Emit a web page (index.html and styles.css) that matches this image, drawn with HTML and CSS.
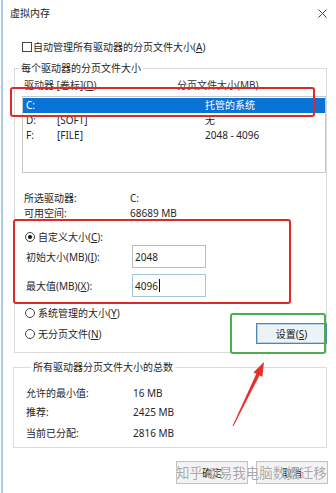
FILE: index.html
```html
<!DOCTYPE html>
<html lang="zh-CN">
<head>
<meta charset="utf-8">
<title>虚拟内存</title>
<link rel="stylesheet" href="styles.css">
</head>
<body>
<div class="window">
  <div class="titlebar">
    <span class="title">虚拟内存</span>
    <svg class="close" width="9" height="9" viewBox="0 0 9 9"><path d="M0.5 0.5L8.5 8.5M8.5 0.5L0.5 8.5" stroke="#444" stroke-width="1" fill="none"/></svg>
  </div>
  <div class="check-row"><span class="checkbox"></span><span>自动管理所有驱动器的分页文件大小(<u>A</u>)</span></div>
  <fieldset class="group group-drives">
    <legend>每个驱动器的分页文件大小</legend>
    <div class="list-head"><span class="col-drive">驱动器 [卷标](<u>D</u>)</span><span>分页文件大小(MB)</span></div>
    <div class="listbox">
      <div class="list-row selected"><span class="c1">C:</span><span class="c2"></span><span class="c3">托管的系统</span></div>
      <div class="list-row"><span class="c1">D:</span><span class="c2">[SOFT]</span><span class="c3">无</span></div>
      <div class="list-row"><span class="c1">F:</span><span class="c2">[FILE]</span><span class="c3">2048 - 4096</span></div>
    </div>
    <div class="info-row first"><span class="info-label">所选驱动器:</span><span>C:</span></div>
    <div class="info-row"><span class="info-label">可用空间:</span><span>68689 MB</span></div>
    <div class="radio-row custom"><span class="radio checked"></span><span>自定义大小(<u>C</u>):</span></div>
    <div class="field-row"><span class="field-label">初始大小(MB)(<u>I</u>):</span><div class="input">2048</div></div>
    <div class="field-row second"><span class="field-label">最大值(MB)(<u>X</u>):</span><div class="input focused">4096<span class="caret"></span></div></div>
    <div class="radio-row sys"><span class="radio"></span><span>系统管理的大小(<u>Y</u>)</span></div>
    <div class="last-row">
      <div class="radio-row"><span class="radio"></span><span>无分页文件(<u>N</u>)</span></div>
      <button class="btn btn-default">设置(<u>S</u>)</button>
    </div>
  </fieldset>
  <fieldset class="group totals">
    <legend>所有驱动器分页文件大小的总数</legend>
    <div class="total-row r1"><span class="total-label">允许的最小值:</span><span>16 MB</span></div>
    <div class="total-row r2"><span class="total-label">推荐:</span><span>2425 MB</span></div>
    <div class="total-row r3"><span class="total-label">当前已分配:</span><span>2816 MB</span></div>
  </fieldset>
  <div class="footer">
    <button class="btn">确定</button>
    <button class="btn">取消</button>
  </div>
</div>

<div class="mark mark-red mark-list"></div>
<div class="mark mark-red mark-custom"></div>
<div class="mark mark-green"></div>
<svg class="arrow" width="336" height="493" viewBox="0 0 336 493">
  <polygon points="232.6,425.8 256.3,373.8 253.4,372.4 264,362 262.4,376.8 259.5,375.4 233.4,426.2" fill="#e8302a"/>
</svg>
<div class="watermark">知乎 @易我电脑数据迁移</div>
</body>
</html>
```

FILE: styles.css
```css
* { box-sizing: border-box; }
html, body { margin: 0; padding: 0; }
body {
  width: 336px;
  height: 493px;
  position: relative;
  overflow: hidden;
  background: #fff;
  font-family: "Noto Sans", "Noto Sans CJK SC", sans-serif;
  font-size: 10px;
  line-height: 12px;
  color: #262626;
}
u { text-decoration: underline; text-underline-offset: 1px; }

.window {
  margin-left: 1px;
  border-left: 2px solid #aacbe6;
  height: 493px;
  display: flex;
  flex-direction: column;
  align-items: flex-start;
}

.titlebar {
  width: 333px;
  height: 26px;
  display: flex;
  align-items: center;
  justify-content: space-between;
  padding: 0 9px 0 7px;
}
.title { color: #222; }

.check-row {
  margin: 15px 0 0 19px;
  display: flex;
  align-items: center;
  gap: 1px;
}
.checkbox {
  width: 10px;
  height: 10px;
  border: 1px solid #444;
  background: #fff;
}

.group {
  margin: 9px 0 0 11px;
  width: 313px;
  min-width: 0;
  border: 1px solid #dcdcdc;
  padding: 0 0 8px 0;
}
.group legend {
  margin-left: 4px;
  padding: 0 2px;
  font-size: 10px;
  line-height: 12px;
}

.list-head {
  margin: 5px 0 0 9px;
  display: flex;
  color: #333;
}
.col-drive { width: 153px; }

.listbox {
  margin: 5px 0 0 7px;
  width: 304px;
  height: 77px;
  border: 1px solid #c8c8c8;
  padding-top: 1px;
  background: #fff;
}
.list-row {
  height: 15px;
  line-height: 15px;
  display: flex;
  padding-left: 3px;
}
.list-row.selected { background: #0a74d6; color: #fff; }
.c1 { width: 31px; }
.c2 { width: 148px; }

.info-row { display: flex; margin: 3px 0 0 9px; }
.info-row.first { margin-top: 19px; }
.info-label { width: 106px; }

.radio-row { display: flex; align-items: center; gap: 3px; }
.radio {
  width: 10px;
  height: 10px;
  border: 1px solid #444;
  border-radius: 50%;
  display: flex;
  align-items: center;
  justify-content: center;
  background: #fff;
}
.radio.checked::after {
  content: "";
  width: 4px;
  height: 4px;
  border-radius: 50%;
  background: #111;
}
.custom { margin: 12px 0 0 10px; }
.sys { margin: 10px 0 0 10px; }

.field-row { display: flex; align-items: center; margin: 2px 0 0 11px; }
.field-row.second { margin-top: 6px; }
.field-label { width: 106px; }
.input {
  width: 74px;
  height: 23px;
  border: 1px solid #bcbcbc;
  padding-left: 2px;
  display: flex;
  align-items: center;
  background: #fff;
  color: #1e1e1e;
}
.input.focused { border-color: #a3c6d9; }
.caret {
  display: inline-block;
  width: 1px;
  height: 13px;
  margin-left: 1px;
  background: #111;
}

.last-row {
  width: 302px;
  height: 21px;
  margin: 4px 0 0 10px;
  display: flex;
  align-items: center;
  justify-content: space-between;
}

.btn {
  font-family: inherit;
  font-size: 10px;
  line-height: 12px;
  color: #222;
  padding: 0;
  width: 72px;
  height: 23px;
  border: 1px solid #c2c2c2;
  background: #f3f3f3;
}
.btn-default {
  width: 71px;
  height: 21px;
  border: 1px solid #4b86b8;
  box-shadow: inset 0 0 0 1px #b7d1e6;
  background: #edf2f6;
}

.totals {
  margin: 8px 0 0 10px;
  width: 314px;
  padding: 0 0 8px 12px;
}
.totals legend { margin-left: 5px; }
.total-row { display: flex; }
.total-row.r1 { margin-top: 14px; }
.total-row.r2 { margin-top: 7px; }
.total-row.r3 { margin-top: 9px; }
.total-label { width: 107px; }

.footer {
  margin: 13px 0 0 173px;
  display: flex;
  gap: 8px;
}

.mark { position: absolute; border-radius: 3px; }
.mark-red { border: 2px solid #dc2a2a; }
.mark-list { left: 10px; top: 87px; width: 305px; height: 30px; }
.mark-custom { left: 13px; top: 219px; width: 278px; height: 85px; }
.mark-green { border: 2px solid #4cae4c; left: 230px; top: 313px; width: 96px; height: 41px; }

.arrow { position: absolute; left: 0; top: 0; pointer-events: none; }

.watermark {
  position: absolute;
  left: 176px;
  top: 463px;
  font-size: 13.5px;
  line-height: 20px;
  color: rgba(130, 130, 130, 0.7);
  white-space: nowrap;
  text-shadow: 0 0 1px #fff;
}
```
